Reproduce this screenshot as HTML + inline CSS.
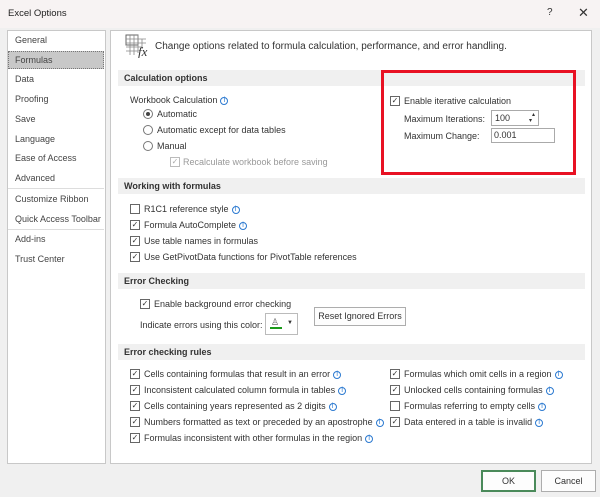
<!DOCTYPE html>
<html><head><style>
body{margin:0;width:600px;height:497px;background:#f0f0f0;font-family:"Liberation Sans",sans-serif;font-size:9px;color:#333;position:relative;overflow:hidden}
.a{position:absolute;white-space:nowrap}
.nav{left:7px;top:30px;width:97px;height:432px;background:#fff;border:1px solid #c8c8c8}
.main{left:110px;top:30px;width:480px;height:432px;background:#fff;border:1px solid #c8c8c8}
.hd{position:absolute;left:118px;width:467px;height:16px;background:#f0f0f0;font-weight:bold;line-height:16px;text-indent:6px;color:#333}
.cb{position:absolute;width:8px;height:8px;border:1px solid #666;background:#fff;font-size:8px;line-height:8px;text-align:center;color:#333}
.rd{position:absolute;width:8px;height:8px;border:1px solid #777;border-radius:50%;background:#fff}
.i{color:#2b79d0;font-size:7px;border:1px solid #2b79d0;border-radius:50%;display:inline-block;width:6px;height:6px;line-height:6px;text-align:center;margin-left:3px;vertical-align:1px}
.btn{position:absolute;background:#fdfdfd;border:1px solid #adadad;text-align:center}
</style></head><body>
<div class="a" style="left:0;top:0;width:600px;height:28px;background:#f7f3f3"></div>
<div class="a" style="left:8px;top:8px;font-size:9.5px;color:#222">Excel Options</div>
<div class="a" style="left:547px;top:7px;font-size:10px">?</div>
<div class="a" style="left:578px;top:5px;font-size:13px">✕</div>
<div class="a nav"></div>
<div class="a" style="left:8px;top:51px;width:96px;height:18px;background:#c8c8c8;border:1px dotted #777;box-sizing:border-box"></div>
<div class="a" style="left:15px;top:31px;line-height:19.7px;color:#444">General<br>Formulas<br>Data<br>Proofing<br>Save<br>Language<br>Ease of Access<br>Advanced</div>
<div class="a" style="left:8px;top:188px;width:96px;border-top:1px solid #ddd"></div>
<div class="a" style="left:15px;top:189px;line-height:20px;color:#444">Customize Ribbon<br>Quick Access Toolbar</div>
<div class="a" style="left:8px;top:229px;width:96px;border-top:1px solid #ddd"></div>
<div class="a" style="left:15px;top:229px;line-height:20px;color:#444">Add-ins<br>Trust Center</div>
<div class="a main"></div>
<svg class="a" style="left:125px;top:34px" width="26" height="24"><rect x="1" y="1" width="12" height="10" fill="#fff" stroke="#666"/><path d="M1 5h20M1 9h20M1 13h16M1 17h12M5 1v20M9 1v20M13 1v18M17 5v10" stroke="#888" fill="none" stroke-width=".8"/><text x="13" y="22" font-size="13" font-style="italic" font-family="Liberation Serif" fill="#333">fx</text></svg>
<div class="a" style="left:155px;top:41px;font-size:10px;color:#333">Change options related to formula calculation, performance, and error handling.</div>
<div class="hd" style="top:70px">Calculation options</div>
<div class="a" style="left:130px;top:95px">Workbook Calculation<span class="i">i</span></div>
<div class="rd" style="left:143px;top:109px"></div><div class="a" style="left:146px;top:112px;width:4px;height:4px;border-radius:50%;background:#444"></div>
<div class="a" style="left:157px;top:109px">Automatic</div>
<div class="rd" style="left:143px;top:125px"></div><div class="a" style="left:157px;top:125px">Automatic except for data tables</div>
<div class="rd" style="left:143px;top:141px"></div><div class="a" style="left:157px;top:141px">Manual</div>
<div class="cb" style="left:170px;top:157px;border-color:#bbb;color:#aaa">✓</div><div class="a" style="left:183px;top:157px;color:#999">Recalculate workbook before saving</div>
<div class="cb" style="left:390px;top:96px">✓</div><div class="a" style="left:404px;top:96px">Enable iterative calculation</div>
<div class="a" style="left:404px;top:114px">Maximum Iterations:</div>
<div class="a" style="left:491px;top:110px;width:46px;height:14px;border:1px solid #aaa;background:#fff;line-height:14px;text-indent:3px">100<span style="position:absolute;right:3px;font-size:6px;line-height:6px;top:1px">▴<br>▾</span></div>
<div class="a" style="left:404px;top:131px">Maximum Change:</div>
<div class="a" style="left:491px;top:128px;width:62px;height:13px;border:1px solid #aaa;background:#fff;line-height:13px;text-indent:2px">0.001</div>
<div class="a" style="left:381px;top:70px;width:189px;height:99px;border:3px solid #e81123"></div>
<div class="hd" style="top:178px">Working with formulas</div>
<div class="cb" style="left:130px;top:204px"></div><div class="a" style="left:144px;top:204px">R1C1 reference style<span class="i">i</span></div>
<div class="cb" style="left:130px;top:220px">✓</div><div class="a" style="left:144px;top:220px">Formula AutoComplete<span class="i">i</span></div>
<div class="cb" style="left:130px;top:236px">✓</div><div class="a" style="left:144px;top:236px">Use table names in formulas</div>
<div class="cb" style="left:130px;top:252px">✓</div><div class="a" style="left:144px;top:252px">Use GetPivotData functions for PivotTable references</div>
<div class="hd" style="top:273px">Error Checking</div>
<div class="cb" style="left:140px;top:299px">✓</div><div class="a" style="left:154px;top:299px">Enable background error checking</div>
<div class="a" style="left:140px;top:320px">Indicate errors using this color:</div>
<div class="a" style="left:265px;top:313px;width:31px;height:20px;border:1px solid #bbb;background:#fff"></div>
<div class="a" style="left:271px;top:317px;font-size:9px;color:#555">♙</div><div class="a" style="left:270px;top:327px;width:12px;height:2px;background:#1a9a1a"></div><div class="a" style="left:287px;top:320px;font-size:6px">▼</div>
<div class="btn" style="left:314px;top:307px;width:90px;height:17px;line-height:17px">Reset Ignored Errors</div>
<div class="hd" style="top:344px">Error checking rules</div>
<div class="cb" style="left:130px;top:369px">✓</div><div class="a" style="left:144px;top:369px">Cells containing formulas that result in an error<span class="i">i</span></div>
<div class="cb" style="left:130px;top:385px">✓</div><div class="a" style="left:144px;top:385px">Inconsistent calculated column formula in tables<span class="i">i</span></div>
<div class="cb" style="left:130px;top:401px">✓</div><div class="a" style="left:144px;top:401px">Cells containing years represented as 2 digits<span class="i">i</span></div>
<div class="cb" style="left:130px;top:417px">✓</div><div class="a" style="left:144px;top:417px">Numbers formatted as text or preceded by an apostrophe<span class="i">i</span></div>
<div class="cb" style="left:130px;top:433px">✓</div><div class="a" style="left:144px;top:433px">Formulas inconsistent with other formulas in the region<span class="i">i</span></div>
<div class="cb" style="left:390px;top:369px">✓</div><div class="a" style="left:404px;top:369px">Formulas which omit cells in a region<span class="i">i</span></div>
<div class="cb" style="left:390px;top:385px">✓</div><div class="a" style="left:404px;top:385px">Unlocked cells containing formulas<span class="i">i</span></div>
<div class="cb" style="left:390px;top:401px"></div><div class="a" style="left:404px;top:401px">Formulas referring to empty cells<span class="i">i</span></div>
<div class="cb" style="left:390px;top:417px">✓</div><div class="a" style="left:404px;top:417px">Data entered in a table is invalid<span class="i">i</span></div>
<div class="btn" style="left:481px;top:470px;width:51px;height:18px;line-height:18px;border:2px solid #4a8a5a">OK</div>
<div class="btn" style="left:541px;top:470px;width:53px;height:20px;line-height:20px">Cancel</div>
</body></html>
